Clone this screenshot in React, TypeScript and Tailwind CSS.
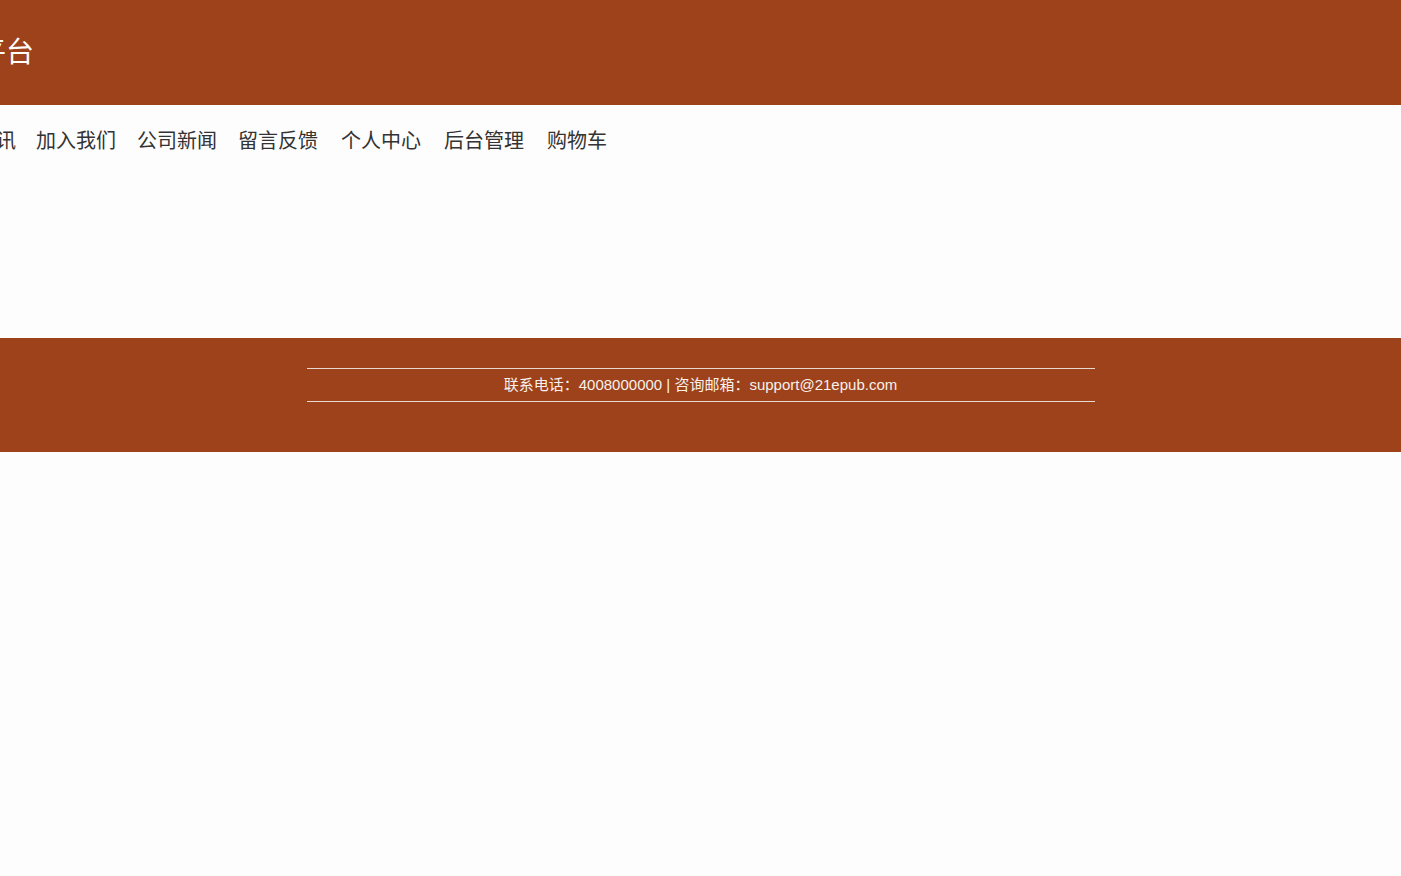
const nav: { label: string; cls: string }[] = [
  { label: "首页", cls: "" },
  { label: "图书分类", cls: "ml-[21px]" },
  { label: "新闻资讯", cls: "ml-[21px]" },
  { label: "加入我们", cls: "ml-[20px]" },
  { label: "公司新闻", cls: "ml-[21px]" },
  { label: "留言反馈", cls: "ml-[21px]" },
  { label: "个人中心", cls: "ml-[23px]" },
  { label: "后台管理", cls: "ml-[23px]" },
  { label: "购物车", cls: "ml-[23px]" },
];

export default function App() {
  return (
    <div className="min-h-[876px] bg-[#fdfdfd] font-['Liberation_Sans','Noto_Sans_CJK_SC',sans-serif] overflow-hidden">
      <header className="h-[105px] bg-[#9d421a] flex items-center">
        <div className="w-[34px] flex justify-end whitespace-nowrap pt-[1px]">
          <h1 className="text-[28px] leading-none text-white font-normal">电子书交易平台</h1>
        </div>
      </header>
      <main className="h-[233px]">
        <nav className="w-[607px] flex justify-end whitespace-nowrap pt-[25px]">
          <ul className="flex text-[20px] leading-[22px] text-[#333333]">
            {nav.map((n) => (
              <li key={n.label} className={`shrink-0 ${n.cls}`}>{n.label}</li>
            ))}
          </ul>
        </nav>
      </main>
      <footer className="bg-[#9d421a] pt-[30px] pb-[50px]">
        <div className="w-[788px] mx-auto border-y border-[#e8d8d0] h-[34px] flex items-center justify-center text-[15px] text-[#f7f0ec]">
          联系电话：4008000000 | 咨询邮箱：support@21epub.com
        </div>
      </footer>
    </div>
  );
}
